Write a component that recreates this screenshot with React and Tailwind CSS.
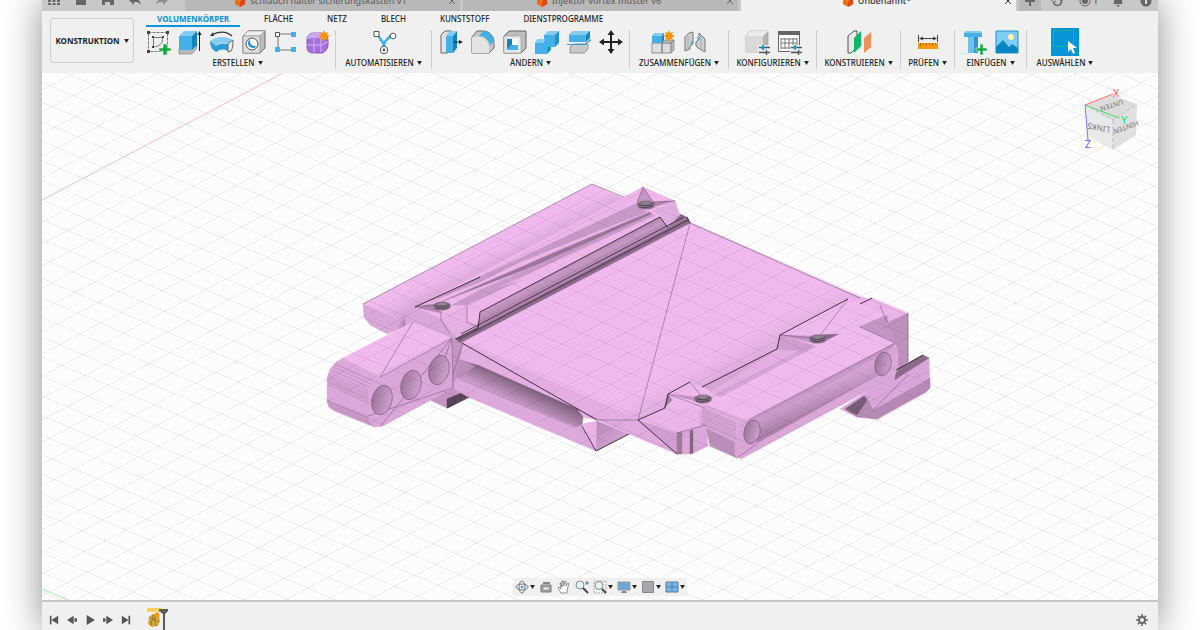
import clsx from 'clsx'

const BLUE = '#45b0e6'

function Caret({ className }) {
  return (
    <svg viewBox="0 0 6 5" className={clsx('w-[5px] h-1 shrink-0', className)} aria-hidden="true">
      <path d="M0 0h6L3 5z" fill="currentColor" />
    </svg>
  )
}

/* ---------- ribbon icons, all on a 24 x 24 grid ---------- */

const ICONS = {
  sketch: (
    <>
      <path d="M2.500 2.500h19v19h-19z" fill="none" stroke="#777" strokeDasharray="3 1" />
      <path d="M7.500 7.500h9v2c0 4-3 7-9 7.500z" fill="none" stroke="#777" />
      <path d="M1 1h3v3H1zM20 1h3v3h-3zM1 20h3v3H1zM6 6h2v2H6zM16 6h2v2h-2zM6 16h2v2H6z" fill="#444" />
      <path d="M17 14h4v4h4v3h-4v4h-4v-4h-4v-3h4z" fill="#0faa3c" stroke="#f0f0f0" strokeWidth=".6" />
    </>
  ),
  extrude: (
    <>
      <path d="M1 19l5-5h13v4l-5 6H1z" fill="#b9b9b9" stroke="#888" strokeWidth=".7" />
      <path d="M1 6h13v14H1z" fill={BLUE} />
      <path d="M1 6l5-5h13l-5 5z" fill="#84cdf1" />
      <path d="M14 6l5-5v14l-5 5z" fill="#1584bd" />
      <path d="M21.500 21V3" stroke="#222" />
      <path d="M19.500 5l2-4 2 4z" fill="#222" />
    </>
  ),
  revolve: (
    <>
      <path d="M2 5c6-4 14-4 20 1" fill="none" stroke="#333" strokeWidth="1.100" />
      <path d="M0 6l3-4 1 4z" fill="#333" />
      <path d="M0 11c7-5 15-5 23-1l-5 4c-4-2-9-2-12 2z" fill="#84cdf1" />
      <path d="M0 11l6 5c3-3 8-3 12-2v7c-4-2-8-2-11 1-4-1-7-5-7-11z" fill="#2f9dd8" />
      <path d="M18 14l5-4c0 4 0 8-2 11l-3 1z" fill="#eee" stroke="#666" />
    </>
  ),
  hole: (
    <>
      <path d="M1 6l5-5h17v17l-5 5H1z" fill="#bdbdbd" stroke="#666" />
      <path d="M1 6l5-5h17l-5 5z" fill="#efefef" stroke="#888" strokeWidth=".6" />
      <path d="M1 6h17v17H1z" fill="#dedede" stroke="#888" strokeWidth=".6" />
      <circle cx="10" cy="14" r="6" fill="#f5f5f5" stroke="#555" />
      <path d="M8 9a5 5 0 1 0 7 7c-5 1-8-2-7-7z" fill="#1791cf" />
    </>
  ),
  pattern: (
    <>
      <path d="M4 4h16M4 20h16M4 4v16" stroke="#777" fill="none" />
      <path d="M1.500 2.500h4v4h-4z" fill="#fff" stroke="#555" />
      <path d="M17 2h5v5h-5zM1 17h5v5H1zM17 17h5v5h-5z" fill={BLUE} />
    </>
  ),
  form: (
    <>
      <path d="M1 9c0-3 2-5 5-6h9c4 1 7 3 7 7v6c-1 4-3 6-6 7H7c-4 0-6-2-6-6z" fill="#a56fdc" stroke="#7547a9" strokeWidth=".8" />
      <path d="M1 9c0-3 2-5 5-6h9l1 5H8z" fill="#cba6f2" />
      <path d="M1 15h14l7-3M8 8v15M15 8v14" stroke="#d9bff5" strokeWidth=".9" fill="none" />
      <Star x={18} y={6} />
    </>
  ),
  automate: (
    <>
      <path d="M5 4c3 6 7 6 7 14 0-8 3-8 7-13" stroke={BLUE} strokeWidth="2.400" fill="none" />
      <path d="M7 10c3 2 8 2 11-2" stroke={BLUE} fill="none" />
      <path d="M2 1.500h5v5H2z" fill="#fff" stroke="#555" />
      <circle cx="21" cy="6" r="2.900" fill="#fff" stroke="#555" />
      <circle cx="12" cy="20" r="3.700" fill="#fff" stroke="#555" />
      <circle cx="12" cy="20" r="1.400" fill="#555" />
    </>
  ),
  press: (
    <>
      <path d="M2 5l4-4h7v18l-4 4H2z" fill="#e2e2e2" stroke="#666" />
      <path d="M7 6h7v17H7z" fill={BLUE} />
      <path d="M7 6l4-5h7l-4 5z" fill="#84cdf1" />
      <path d="M14 6l4-5v17l-4 5z" fill="#1584bd" />
      <path d="M15 12h6" stroke="#222" />
      <path d="M20 10l4 2-4 2z" fill="#222" />
    </>
  ),
  fillet: (
    <>
      <path d="M1 23V7l5-6h6c6 0 11 5 11 11v6l-5 5z" fill="#c9c9c9" stroke="#666" />
      <path d="M1 23V7h6c7 0 11 5 11 11v5z" fill="#e3e3e3" />
      <path d="M8 6l4-5c6 0 11 5 11 10l-4 5c0-5-5-10-11-10z" fill={BLUE} />
    </>
  ),
  shell: (
    <>
      <path d="M1 6l5-5h17v17l-5 5H1z" fill="#bdbdbd" stroke="#666" />
      <path d="M1 6h17v17H1z" fill="#e9e9e9" stroke="#999" strokeWidth=".6" />
      <path d="M4 9h11v11H4z" fill="#f9f9f9" />
      <path d="M4 9h5v6l-5 5z" fill="#1584bd" />
      <path d="M4 20l5-5h6v5z" fill={BLUE} />
    </>
  ),
  combine: (
    <>
      <path d="M0 13l3-4h7V5l4-4h10v12l-4 4h-4v3l-4 4H0z" fill="#1f93d0" />
      <path d="M0 13h9V5h11v12h-8v7H0z" fill={BLUE} />
      <path d="M0 13l3-4h7l-1 4zM9 5l4-4h11l-4 4z" fill="#84cdf1" />
    </>
  ),
  split: (
    <>
      <path d="M3 17l4-3h14v5l-4 4H3z" fill="#c9c9c9" stroke="#777" strokeWidth=".7" />
      <path d="M2 5l4-4h17v7l-4 4H2z" fill="#1584bd" />
      <path d="M2 5h17v7H2z" fill={BLUE} />
      <path d="M2 5l4-4h17l-4 4z" fill="#84cdf1" />
      <path d="M0 14.500h18l6-5" stroke="#2798d3" strokeWidth="1.200" fill="none" />
    </>
  ),
  move: (
    <path
      d="M12 0l3.500 5h-2.500v6h6V8.500l5 3.500-5 3.500V13h-6v6h2.500L12 24l-3.500-5H11v-6H5v2.500L0 12l5-3.500V11h6V5H8.500z"
      fill="#222"
    />
  ),
  component: (
    <>
      <path d="M1 13h10v10H1zM11 13h9v10h-9z" fill="#dedede" stroke="#777" strokeWidth=".8" />
      <path d="M11 13l3-3h9l-3 3zM20 13l3-3v10l-3 3z" fill="#b9b9b9" stroke="#777" strokeWidth=".6" />
      <path d="M1 6l3-3h9v7l-2 3H1z" fill="#1584bd" />
      <path d="M1 6h10v7H1z" fill={BLUE} />
      <path d="M1 6l3-3h9l-2 3z" fill="#84cdf1" />
      <Star x={18} y={6} />
    </>
  ),
  joint: (
    <>
      <path d="M2 7l4-4 4-1v12l-3 2v3l-5 2z" fill="#cfcfcf" stroke="#777" />
      <path d="M22 22l-7-4-2-2v-4l3-2V3l6 6z" fill="#cfcfcf" stroke="#777" />
      <path d="M5 6v14M18 6v13" stroke="#999" strokeWidth=".7" />
      <path d="M8.500 11v4M15 7v4" stroke={BLUE} strokeWidth="1.500" />
    </>
  ),
  configure: (
    <>
      <path d="M1 6l4-5h18v15l-4 6H1z" fill="#b5b5b5" stroke="#999" strokeWidth=".6" />
      <path d="M1 6h17v16H1z" fill="#d9d9d9" />
      <path d="M1 6l4-5h18l-5 5z" fill="#ececec" />
      <Sliders />
    </>
  ),
  configTable: (
    <>
      <path d="M1.500 1.500h21v20h-21z" fill="#fff" stroke="#666" />
      <path d="M1 1h22v4H1z" fill="#666" />
      <path d="M4 9h16M4 13h16M4 18h10M4 8v11M8 8v11M12 8v11M16 8v7M20 8v7" stroke="#777" />
      <Sliders />
    </>
  ),
  plane: (
    <>
      <path d="M1 6l6-5h3v16l-6 6H1z" fill="#e9e9e9" stroke="#555" />
      <path d="M7 8l7-7v15l-7 7z" fill="#0cb765" />
      <path d="M17 8l7-6v15l-7 6z" fill="#ef9058" />
    </>
  ),
  measure: (
    <>
      <path d="M2.500 5v7M21.500 5v7M4 8.500h16" stroke="#444" />
      <path d="M3 8.500l4-2v4zM21 8.500l-4-2v4z" fill="#444" />
      <path d="M2 13h20v6H2z" fill="#f59a0c" />
      <path d="M4.500 13v3M7.500 13v2M10.500 13v3M13.500 13v2M16.500 13v3M19.500 13v2" stroke="#8c5300" strokeWidth=".7" />
    </>
  ),
  insert: (
    <>
      <path d="M1 3l2-2h14l2 2v4H1z" fill={BLUE} />
      <path d="M1 3l2-2h14l2 2z" fill="#84cdf1" />
      <path d="M5 7h10v16H5z" fill="#6fc0ea" />
      <path d="M11 7h4v16h-4z" fill="#2798d3" />
      <path d="M17 14h3v4h4v3h-4v4h-3v-4h-4v-3h4z" fill="#0faa3c" stroke="#f0f0f0" strokeWidth=".6" />
    </>
  ),
  image: (
    <>
      <path d="M1 1h22v22H1z" fill="#7fcdf5" stroke="#2391cb" />
      <circle cx="16" cy="7" r="3" fill="#fff2b5" />
      <path d="M1 17l7-7 6 7 3-3 6 4v5H1z" fill="#0b87c4" />
    </>
  ),
}

function Star({ x, y }) {
  return (
    <path
      transform={`translate(${x} ${y})`}
      d="M0-6l1.300 3L4-4 3-1.300 6 0 3 1.300 4 4 1.300 3 0 6l-1.300-3L-4 4l1-2.700L-6 0l3-1.300L-4-4l2.700 1z"
      fill="#f7930c"
    />
  )
}

function Sliders() {
  return (
    <>
      <path d="M13 15h12v10H13z" fill="#f0f0f0" opacity=".8" />
      <path d="M14 17.500h11M14 22.500h11M21.500 20v5" stroke="#555" strokeWidth="1.300" />
      <path d="M18 15v5M16 17.500h4" stroke="#1791cf" strokeWidth="1.600" />
    </>
  )
}

const GROUPS = [
  { label: 'Erstellen', icons: ['sketch', 'extrude', 'revolve', 'hole', 'pattern', 'form'], width: 'w-[196px]' },
  { label: 'Automatisieren', icons: ['automate'], width: 'w-24' },
  { label: 'Ändern', icons: ['press', 'fillet', 'shell', 'combine', 'split', 'move'], width: 'w-[198px]' },
  { label: 'Zusammenfügen', icons: ['component', 'joint'], width: 'w-[99px]' },
  { label: 'Konfigurieren', icons: ['configure', 'configTable'], width: 'w-[88px]' },
  { label: 'Konstruieren', icons: ['plane'], width: 'w-[84px]' },
  { label: 'Prüfen', icons: ['measure'], width: 'w-[54px]' },
  { label: 'Einfügen', icons: ['insert', 'image'], width: 'w-[72px]' },
]

const TABS = ['Fläche', 'Netz', 'Blech', 'Kunststoff', 'Dienstprogramme']

/* ---------- title bar ---------- */

function OrangeCube() {
  return (
    <svg viewBox="0 0 12 12" className="w-3 h-3 shrink-0" aria-hidden="true">
      <path d="M1 3l5-3 5 3v6l-5 3-5-3z" fill="#f46a1b" />
      <path d="M1 3l5-3 5 3-5 3z" fill="#ffa35c" />
      <path d="M6 6l5-3v6l-5 3z" fill="#d94b06" />
    </svg>
  )
}

function DocTab({ title, active }) {
  return (
    <div
      className={clsx(
        'flex flex-1 h-5 items-center mr-[3px] pl-3',
        active ? 'bg-[#f0f0f0] text-[#333]' : 'bg-[#b8b8b8] text-[#666]'
      )}
    >
      <button className="flex flex-1 items-center justify-center gap-1 whitespace-nowrap">
        <OrangeCube />
        {title}
      </button>
      <button aria-label={`${title} schließen`} className="w-4 h-4 flex items-center justify-center">
        <svg viewBox="0 0 8 8" className="w-2 h-2" aria-hidden="true">
          <path d="M1 1l6 6M7 1L1 7" stroke="currentColor" fill="none" />
        </svg>
      </button>
    </div>
  )
}

function BarButton({ label, children }) {
  return (
    <button aria-label={label} className="w-4 h-5 flex items-center justify-center">
      <svg viewBox="0 0 12 12" className="w-3 h-3" aria-hidden="true" fill="#666">
        {children}
      </svg>
    </button>
  )
}

function TitleBar() {
  return (
    <header className="flex items-end h-[11px] shrink-0 overflow-hidden bg-[#c8c8c8] text-[9px] font-medium">
      <div className="flex w-[143px] px-1 gap-[11px] shrink-0">
        <BarButton label="Datenbereich">
          <path d="M0 0h3v3H0zM4.500 0h3v3h-3zM9 0h3v3H9zM0 4h3v3H0zM4.500 4h3v3h-3zM9 4h3v3H9zM0 8h3v2H0zM4.500 8h3v2h-3zM9 8h3v2H9z" />
        </BarButton>
        <BarButton label="Datei"><path d="M1 0h7l3 3v7H1z" /></BarButton>
        <BarButton label="Speichern"><path d="M0 2h12v8H0zM3 10V7h5v3z" fillRule="evenodd" /></BarButton>
        <BarButton label="Rückgängig"><path d="M5 1v3c5 0 7 3 7 6-2-3-3-3-7-3v3L0 5z" /></BarButton>
        <BarButton label="Wiederholen"><path d="M7 1v3C2 4 0 7 0 10c2-3 3-3 7-3v3l5-5z" opacity=".6" /></BarButton>
      </div>
      <DocTab title="schlauch halter sicherungskasten v1" />
      <DocTab title="Injektor vortex muster v6" />
      <DocTab title="Unbenannt*" active />
      <button aria-label="Neu" className="w-[22px] h-5 bg-[#b8b8b8] flex items-center justify-center">
        <svg viewBox="0 0 12 12" className="w-3 h-3" aria-hidden="true">
          <path d="M1 6h10M6 1v10" stroke="#666" strokeWidth="2" />
        </svg>
      </button>
      <div className="flex w-[117px] shrink-0 justify-between pl-2 pr-1">
        <BarButton label="Erweiterungen"><path d="M2 4a5 5 0 1 0 9 0l-2 1a3 3 0 1 1-5 0l1 2-5-1z" /></BarButton>
        <div className="flex items-center">
          <BarButton label="Auftragsstatus">
            <circle cx="6" cy="6" r="5" fill="none" stroke="#666" />
            <circle cx="6" cy="6" r="3" />
          </BarButton>
          <span className="text-[#555]">1</span>
        </div>
        <BarButton label="Benachrichtigungen"><path d="M2 8V5a4 4 0 0 1 8 0v3l1 1H1zM4 10h4l-2 2z" /></BarButton>
        <BarButton label="Hilfe"><circle cx="6" cy="6" r="5.500" /><path d="M5 5h2v4H5z" fill="#ddd" /></BarButton>
      </div>
    </header>
  )
}

/* ---------- ribbon ---------- */

function GroupLabel({ children }) {
  return (
    <button className="flex items-center justify-center gap-[3px] text-[8px] leading-[12px] font-medium uppercase whitespace-nowrap">
      {children}
      <Caret />
    </button>
  )
}

function Ribbon() {
  return (
    <div className="flex shrink-0 bg-[#f0f0f0] pl-2 pt-[3px] pb-1 text-[#222]">
      <button className="flex items-center justify-center gap-1 w-[84px] h-[45px] mt-1 rounded-[3px] border border-[#cfcfcf] text-[8px] font-bold shrink-0">
        KONSTRUKTION
        <Caret />
      </button>
      <div className="flex flex-col pl-[6px]">
        <nav className="flex gap-[34px] h-[13px] text-[8px] leading-[9px] font-medium pl-[6px]">
          <button className="w-[94px] -mr-[10px] font-bold text-[#0a8fd6] uppercase border-b-2 border-[#0a96dc] pb-[2px]">
            Volumenkörper
          </button>
          {TABS.map(t => (
            <button key={t} className="uppercase whitespace-nowrap pb-1">
              {t}
            </button>
          ))}
        </nav>
        <div className="flex pt-[3px]">
          {GROUPS.map(g => (
            <section key={g.label} className={clsx('flex flex-col items-center border-r border-[#cdcdcd] h-[39px]', g.width)}>
              <div className="flex gap-2 h-[27px]">
                {g.icons.map(name => (
                  <button key={name} aria-label={name} className="w-6 h-6">
                    <svg viewBox="0 0 24 24" className="w-6 h-6 overflow-visible" aria-hidden="true">{ICONS[name]}</svg>
                  </button>
                ))}
              </div>
              <GroupLabel>{g.label}</GroupLabel>
            </section>
          ))}
          <section className="flex flex-col items-center w-[76px] h-[39px]">
            <div className="h-[27px]">
              <button aria-label="Auswahl" className="block w-7 h-7 -mt-[2px] bg-[#0696d7]">
                <svg viewBox="0 0 28 28" className="w-7 h-7" aria-hidden="true">
                  <path d="M2.500 2.500h20v16h-20z" fill="none" stroke="#24c26a" strokeDasharray="3 2" />
                  <path d="M17 13v11l3-3 2 5 2-1-2-5h4z" fill="#fff" />
                </svg>
              </button>
            </div>
            <GroupLabel>Auswählen</GroupLabel>
          </section>
        </div>
      </div>
    </div>
  )
}

/* ---------- viewport ---------- */

// ground grid: two line families, every fifth line is a major one
function gridPath(slope, start, step, from, to, skip) {
  let d = ''
  for (let i = from; i <= to; i++) {
    if (skip && i % 5 === 0) continue
    const y = start + i * step
    d += `M42 ${y.toFixed(1)}L1158 ${(y + slope * 1116).toFixed(1)}`
  }
  return d
}

const MAJOR = gridPath(0.428, 200, 19.6, -32, 22) + gridPath(-0.527, 200, 22, -8, 46)
const MINOR = gridPath(0.428, 200, 3.92, -160, 110, true) + gridPath(-0.527, 200, 4.4, -40, 230, true)

const TOP = '#f2bbef'
const SIDE = '#dca8da'
const SHADE = '#c596c3'
const DEEP = '#8d6b8c'

// [points, fill]
const FACES = [
  // rear wing
  ['363,304 592,184 640,205 470,318 440,322 401,320', 'url(#wing)'],
  ['363,304 401,320 418,308 416,322 387,334 370,325 364,317', SIDE],
  ['401,320 405,318 405,326 398,329', SHADE],
  // foot below the left arm
  ['430,400 447,408 469,397 453,386', SHADE],
  ['447,399 466,391 469,396 447,408', '#5c455c'],
  // plate
  ['458,342 689,222 865,299 780,338 777,350 702,388 690,383 668,394 664,408 638,421 597,420', 'url(#plate)'],
  ['462,343 478,349 640,420 597,420', '#e5afe3'],
  ['462,343 597,420 583,417 452,372', '#e6b0e4'],
  // lower body and slot
  ['453,374 583,417 582,427 596,451 468,397 453,388', '#dfaadd'],
  ['457,360 478,365 577,409 583,417 582,425 576,427 456,379 454,368', 'url(#slot)'],
  ['456,361 462,360 474,366 461,378 456,376', '#bd8fbb'],
  ['582,424 597,421 596,451', '#ecb5e9'],
  ['597,421 629,434 596,451', 'url(#box)'],
  ['597,420 638,420 677,454 629,434', '#e2ace0'],
  // left arm
  ['343,358 413,322 452,338 380,377', TOP],
  ['343,358 380,377 372,383 368,393 368,418 372,425 375,427 335,411 329,407 327,402 327,378 330,369 336,362', '#deaadc'],
  ['327,400 368,416 375,427 335,411 329,407', '#c898c6'],
  ['380,377 452,338 453,388 383,426 375,427 370,423 368,416 368,393 372,383', SIDE],
  ['452,338 463,343 453,388', SHADE],
  // clamp ridge
  ['454,338 480,322 667,224 680,214 687,217 690,223 460,343', DEEP],
  ['480,312 660,217 668,228 478,328', 'url(#ridge)'],
  ['415,307 643,187 675,201 652,211 660,217 480,312 467,306 442,320', '#efb7ec'],
  ['415,307 480,277 637,203 646,212 520,262 480,282', '#c999c7'],
  ['443,301 560,250 650,212 652,215 560,256', '#9c779a'],
  ['452,305 480,290 652,214 656,217 580,254 466,305', '#cb9bc9'],
  ['500,287 654,216 657,217 560,268', '#efb7ec'],
  ['643,187 637,203 653,202', SHADE],
  ['653,202 675,201 652,207', '#b387b1'],
  ['652,211 675,201 680,215 667,228 661,217', '#e3aee1'],
  ['415,307 442,320 450,334 413,322 402,320', '#dca8da'],
  ['415,307 434,304 441,313', '#b387b1'],
  ['442,320 467,306 479,312 477,327 456,338 450,334', '#e8b2e5'],
  ['467,306 479,312 477,327 467,322', '#f0b9ed'],
  ['402,320 413,322 452,338 456,337 442,320 415,307', SIDE],
  // right bracket
  ['848,299 862,297 882,304 887,324 852,320', '#edb6ea'],
  ['860,304 872,298 908,313 887,324 848,299', '#edb6ea'],
  ['887,323 908,313 908,362 898,370 893,343', '#bf91bd'],
  ['780,335 848,299 887,315 858,327 813,349', TOP],
  ['858,327 887,315 889,326 896,345', SHADE],
  ['780,335 818,347 800,358 777,349', '#d19fcf'],
  ['702,387 777,349 807,355 720,398', '#d9a6d6'],
  ['777,350 800,351 700,402 712,391', '#e6b0e3'],
  ['780,335 812,336 817,344', SHADE],
  ['816,335 840,334 824,341', '#8d6b8c'],
  ['662,406 700,398 716,400 710,430 680,424', '#edb6ea'],
  ['668,394 690,382 719,397 705,409 665,408', '#f0b9ed'],
  ['668,394 698,397 700,402', SHADE],
  ['668,394 664,408 672,400', '#a47ba2'],
  ['638,420 665,408 703,411 706,425 677,433', '#edb6ea'],
  ['638,420 677,433 677,454', '#d29fd0'],
  ['677,433 706,425 708,446 692,454 677,454', SIDE],
  ['677,433 682,432 682,454 677,454', '#a17b9f'],
  ['690,431 693,430 693,453 690,454', '#866685'],
  // lower right fin
  ['840,409 898,372 923,355 929,358 930,388 926,392 877,419 857,417', SIDE],
  ['896,370 923,355 929,358 902,375 895,380', '#8d6b8c'],
  ['872,411 930,378 930,388 926,392 877,419', '#b88bb6'],
  ['866,396 878,419 857,417 847,411', '#b88db6'],
  ['845,409 864,396 867,400 857,415', '#7a5d79'],
  // right arm
  ['706,405 853,327 860,327 895,343 748,420', TOP],
  ['706,405 748,420 740,426 735,435 735,448 706,435 699,420 700,411', '#e0acdd'],
  ['706,428 735,442 737,458 710,446', '#bd8fbb'],
  ['748,420 895,343 898,350 898,370 890,379 741,459 735,455 735,436 740,425', SIDE],
  ['748,421 895,343 890,350 757,424', '#cb9bc9'],
  ['756,422 873,362 878,375 757,443', 'url(#groove)'],
]

const DARK_EDGES =
  'M415 307L480 277M480 312L660 217L668 228M480 312L478 328L456 339M462 343L597 420M638 420L677 454M582 426L596 451M596 451L629 434M638 420L665 408L668 394L690 382M702 387L777 349L780 335L848 299M860 304L872 298M896 370L923 355M447 408L469 397M687 217L690 223'

const THIN_EDGES =
  'M597 420H638M453 388L452 340M690 223L638 420M363 304L592 184L624 197M690 223L860 298M380 377L452 338M413 322L380 377M452 338L380 427M453 388L368 416M643 187L653 202L675 201M643 187L637 203M415 307L434 305M441 311V320L450 334M818 338L848 299M703 398L690 382M668 394L705 408M677 433L706 425M780 335L812 338M453 374L463 343M404 318V326M748 420L895 343M860 327L895 343M872 411L908 375M908 313V362M737 458L758 443M887 323L880 305M440 371L452 338M467 306V322L479 327'

const HOLES = [
  [382, 400, 10, 15, 14],
  [411, 385, 10, 15, 14],
  [439, 370, 10, 15, 14],
  [752, 432, 8, 12, 12],
  [883, 364, 8, 12, 12],
]

const SCREWS = [[442, 306], [646, 205], [818, 339], [703, 399]]

function hatch(x0, y0, dx, dy, len, n) {
  let d = ''
  for (let i = 0; i < n; i++) d += `M${x0 + dx * i} ${y0 + dy * i}l${len} ${len * 0.46}`
  return d
}

function Model() {
  return (
    <g>
      <defs>
        <linearGradient id="wing" gradientUnits="userSpaceOnUse" x1="480" y1="235" x2="508" y2="290">
          <stop offset=".3" stopColor={TOP} />
          <stop offset="1" stopColor="#b78bb5" />
        </linearGradient>
        <linearGradient id="plate" gradientUnits="userSpaceOnUse" x1="700" y1="290" x2="746" y2="374">
          <stop offset=".65" stopColor={TOP} />
          <stop offset="1" stopColor="#dca8da" />
        </linearGradient>
        <linearGradient id="ridge" gradientUnits="userSpaceOnUse" x1="566" y1="262" x2="577" y2="284">
          <stop offset="0" stopColor="#a980a7" />
          <stop offset=".3" stopColor="#c999c7" />
          <stop offset="1" stopColor="#9a7599" />
        </linearGradient>
        <linearGradient id="slot" gradientUnits="userSpaceOnUse" x1="525" y1="382" x2="513" y2="407">
          <stop offset="0" stopColor="#745a73" />
          <stop offset="1" stopColor="#dba8d9" />
        </linearGradient>
        <linearGradient id="box" x1="0" y1="0" x2="1" y2="1">
          <stop offset="0" stopColor="#b98cb7" />
          <stop offset="1" stopColor="#e0acde" />
        </linearGradient>
        <linearGradient id="groove" gradientUnits="userSpaceOnUse" x1="812" y1="392" x2="820" y2="411">
          <stop offset="0" stopColor="#d5a3d3" />
          <stop offset="1" stopColor="#ab82a9" />
        </linearGradient>
        <linearGradient id="bore">
          <stop offset="0" stopColor="#9d789b" />
          <stop offset="1" stopColor="#d3a2d1" />
        </linearGradient>
      </defs>
      {FACES.map(([points, fill]) => (
        <polygon key={points} points={points} fill={fill} stroke={fill} strokeWidth=".4" />
      ))}
      <path d={hatch(328, 375, 0, 2, 40, 6) + hatch(336, 364, -2, 3, 38, 4) + hatch(702, 408, 0, 2, 34, 9)} stroke="#a27aa0" strokeWidth=".4" />
      <path d="M458 340L688 220M461 334L684 217" stroke="#4c384b" fill="none" />
      <path d="M460 337L686 218" stroke="#b78ab5" strokeWidth=".8" fill="none" />
      <path d={THIN_EDGES} stroke="#6f536e" strokeWidth=".5" fill="none" />
      <path d={DARK_EDGES} stroke="#2f2230" strokeWidth=".9" fill="none" strokeLinejoin="round" />
      {HOLES.map(([x, y, rx, ry, r]) => (
        <ellipse key={x} cx={x} cy={y} rx={rx} ry={ry} transform={`rotate(${r} ${x} ${y})`} fill="url(#bore)" stroke="#73566f" strokeWidth=".6" />
      ))}
      {SCREWS.map(([x, y]) => (
        <g key={x}>
          <ellipse cx={x} cy={y} rx="9" ry="4.500" fill="#8f748d" />
          <path d={`M${x - 8} ${y - 1}q8 4 16-1M${x - 7} ${y + 2}q7 2 14-1`} stroke="#443b43" strokeWidth=".8" fill="none" />
          <path d={`M${x - 3} ${y - 2}h6`} stroke="#8b9f8c" />
        </g>
      ))}
    </g>
  )
}

function ViewCube() {
  return (
    <g fontSize="8" fontWeight="500" fill="#858585" textAnchor="middle">
      <path d="M1085 105l26-10 26 9-24 16z" fill="#dcdcdc" />
      <path d="M1085 105l28 15v30l-26-15z" fill="#e9e9e9" />
      <path d="M1113 120l24-16-1 31-23 15z" fill="#e0e0e0" />
      <path d="M1085 105l28 15 24-16M1113 120v30" stroke="#bbb" strokeDasharray="4 2" fill="none" />
      <text transform="translate(1099 125) rotate(190)">LINKS</text>
      <text transform="translate(1125 125) rotate(160)" fontSize="7">HINTEN</text>
      <text transform="translate(1111 103) rotate(162)" fontSize="7">UNTEN</text>
      <path d="M1085 105l28-11" stroke="#ff6b6b" />
      <path d="M1085 105l34 13" stroke="#3fe06b" />
      <path d="M1085 105l3 35" stroke="#7a7aff" />
      <g fontSize="11" fontWeight="400">
        <text x="1116" y="97" fill="#ff5b5b">X</text>
        <text x="1124" y="124" fill="#1fe05a">Y</text>
        <text x="1088" y="148" fill="#6464ff">Z</text>
      </g>
    </g>
  )
}

const NAV = [
  { label: 'Orbit', menu: true, art: <><ellipse cx="7" cy="7" rx="6" ry="3" fill="none" stroke="#777" /><ellipse cx="7" cy="7" rx="3" ry="6" fill="none" stroke="#777" /><circle cx="7" cy="7" r="1.300" fill="#3f9be0" /></> },
  { label: 'Ansicht', art: <><path d="M2 5h10v7H2z" fill="#aaa" stroke="#777" /><path d="M4 2h7v2H4z" fill="#888" /><path d="M4 7h6v3H4z" fill="#eee" stroke="#777" strokeWidth=".6" /></> },
  { label: 'Pan', art: <path d="M4 13L1 8l1-1 2 2-1-6h1l1 4V1h1.500v5L8 1.500h1V6l2-3 1 .5-1.500 5L10 13z" fill="#fff" stroke="#777" strokeWidth=".8" /> },
  { label: 'Zoom', art: <><circle cx="5" cy="5" r="4" fill="#e3f3fb" stroke="#888" /><path d="M8 8l5 5" stroke="#444" strokeWidth="2" /><path d="M10 3h4M12 1v4" stroke="#555" strokeWidth=".8" /></> },
  { label: 'Einpassen', menu: true, art: <><path d="M1 1h12v12H1z" fill="none" stroke="#aaa" strokeDasharray="2 1" /><circle cx="6" cy="5.500" r="4" fill="#e3f3fb" stroke="#888" /><path d="M9 9l4 4" stroke="#444" strokeWidth="2" /></> },
  { label: 'Anzeige', menu: true, art: <><path d="M1 2h12v8H1z" fill="#6ea7da" stroke="#999" /><path d="M5 11h4l1 2H4z" fill="#888" /></> },
  { label: 'Raster', menu: true, art: <path d="M1.500 1.500h11v11h-11z" fill="#a5a7ab" stroke="#888" /> },
  { label: 'Ansichtsfenster', menu: true, art: <><path d="M1 2h12v10H1z" fill="#79b5ea" stroke="#678" /><path d="M7 2v10M1 7h12" stroke="#4b80b4" /></> },
]

function Viewport() {
  return (
    <main className="relative flex-1 min-h-0 bg-[#fefefe] border-b-2 border-[#c6c6c6]">
      <svg
        viewBox="42 73 1116 527"
        preserveAspectRatio="xMidYMid slice"
        className="absolute inset-0 w-full h-full"
        role="img"
        aria-label="3D-Modell"
      >
        <Model />
        <path d={MINOR} stroke="#000" strokeOpacity=".035" strokeWidth=".5" />
        <path d={MAJOR} stroke="#000" strokeOpacity=".11" strokeWidth=".7" />
        <path d="M42 200L283 73" stroke="#ffc4c4" />
        <path d="M42 589L68 600" stroke="#a5f0a5" />
        <ViewCube />
      </svg>
      <div className="absolute bottom-1 inset-x-0 flex justify-center">
        <div className="flex items-center gap-1 h-[18px] px-[2px] bg-[#f0f0f0] text-[#222]">
          {NAV.map(n => (
            <button key={n.label} aria-label={n.label} className="flex items-center gap-px">
              <svg viewBox="0 0 14 14" className="w-[14px] h-[14px]" aria-hidden="true">{n.art}</svg>
              {n.menu && <Caret />}
            </button>
          ))}
        </div>
      </div>
    </main>
  )
}

/* ---------- timeline ---------- */

const PLAYBACK = [
  ['Zum Anfang', 'M1 1h2v10H1zM11 1v10L3 6z'],
  ['Schritt zurück', 'M8 1v10L0 6zM9 4h3v4H9z'],
  ['Abspielen', 'M2 0l10 6-10 6z'],
  ['Schritt vor', 'M4 1v10l8-5zM0 4h3v4H0z'],
  ['Zum Ende', 'M9 1h2v10H9zM1 1v10l8-5z'],
]

function Timeline() {
  return (
    <footer className="flex shrink-0 h-7 bg-[#f0f0f0] pl-[5px] pr-[10px] text-[#555]">
      <div className="flex items-center gap-[5px] pt-2">
        {PLAYBACK.map(([label, d]) => (
          <button key={label} aria-label={label} className="w-[13px] h-4 flex items-center justify-center">
            <svg viewBox="0 0 12 12" className="w-[10px] h-[10px]" aria-hidden="true">
              <path d={d} fill="currentColor" />
            </svg>
          </button>
        ))}
      </div>
      <button aria-label="Basiselement" className="ml-[14px] self-stretch">
        <svg viewBox="0 0 24 24" className="w-6 h-6 mt-1" aria-hidden="true">
          <path d="M1 2h15v4H1z" fill="#ffd061" />
          <path d="M3 11l4-3 6 1 1 6-2 5-6 1-4-3z" fill="#d7a93c" />
          <path d="M3 11l10 5M7 8l-2 12M13 9L3 17M8 9l2 11" stroke="#8b6b1e" strokeWidth=".7" />
          <circle cx="11" cy="9" r="2.500" fill="#ff970f" />
          <path d="M13 3h9v2l-3 3v16h-2V8l-4-3z" fill="#5b5b5b" />
        </svg>
      </button>
      <button aria-label="Einstellungen" className="ml-auto pt-2">
        <svg viewBox="0 0 12 12" className="w-3 h-3" aria-hidden="true">
          <circle cx="6" cy="6" r="3" fill="none" stroke="#666" strokeWidth="1.800" />
          <path d="M6 0v3M6 9v3M0 6h3M9 6h3M1.800 1.800l2 2M8.200 8.200l2 2M10.200 1.800l-2 2M3.800 8.200l-2 2" stroke="#666" strokeWidth="1.500" />
        </svg>
      </button>
    </footer>
  )
}

export default function App() {
  return (
    <div className="h-screen overflow-hidden bg-white px-[42px] font-['Noto_Sans','Open_Sans',sans-serif]">
      <div className="flex flex-col h-full shadow-[0_0_36px_rgba(0,0,0,0.45)]">
        <TitleBar />
        <Ribbon />
        <Viewport />
        <Timeline />
      </div>
    </div>
  )
}
